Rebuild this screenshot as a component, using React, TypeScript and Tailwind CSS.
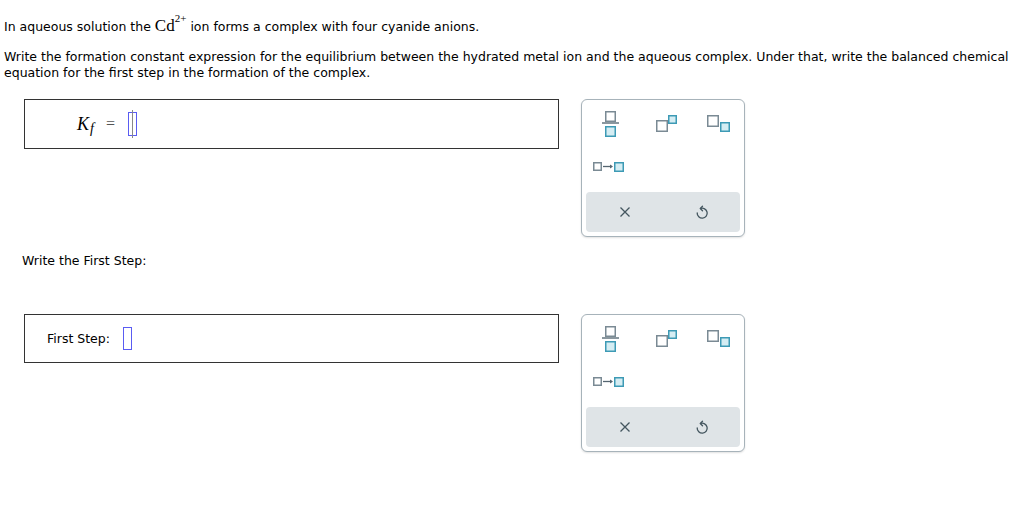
import { ReactNode } from 'react';

function Sq({ x, y, s, fill }: { x: number; y: number; s: number; fill?: boolean }) {
  return (
    <rect
      x={x + 0.75}
      y={y + 0.75}
      width={s - 1.5}
      height={s - 1.5}
      fill={fill ? '#d5edf3' : '#fff'}
      stroke={fill ? '#3d9ab5' : '#7a8a94'}
      strokeWidth="1.5"
    />
  );
}

function Tool({ children, w = 40, h = 30 }: { children: ReactNode; w?: number; h?: number }) {
  return (
    <button className="flex items-center justify-center h-[44px]">
      <svg width={w} height={h} viewBox={`0 0 ${w} ${h}`}>
        {children}
      </svg>
    </button>
  );
}

function Palette() {
  return (
    <div className="w-[164px] h-[138px] border border-[#a7b3ba] rounded-[6px] bg-white shadow-[0_1px_2px_rgba(0,0,0,0.12)] flex flex-col">
      <div className="grid grid-cols-3 pt-[1px] px-[1px]">
        <Tool>
          <Sq x={15} y={3} s={11} />
          <rect x={12} y={14} width={17} height={2} fill="#8a979f" />
          <Sq x={15} y={18} s={11} fill />
        </Tool>
        <Tool>
          <Sq x={13} y={12} s={12} />
          <Sq x={25} y={7} s={9} fill />
        </Tool>
        <Tool>
          <Sq x={11} y={7} s={12} />
          <Sq x={24} y={14} s={10} fill />
        </Tool>
        <Tool w={50}>
          <Sq x={8} y={10} s={9} />
          <line x1={18} y1={14.5} x2={27} y2={14.5} stroke="#556570" strokeWidth="1.3" />
          <path d="M25 12.5 L28 14.5 L25 16.5 Z" fill="#556570" />
          <Sq x={29} y={10} s={10} fill />
        </Tool>
      </div>
      <div className="mt-auto mx-[4px] mb-[4px] h-[40px] rounded-[4px] bg-[#dfe4e7] grid grid-cols-2">
        <button className="flex items-center justify-center">
          <svg width="12" height="12" viewBox="0 0 12 12">
            <path d="M1.5 1.5 L10.5 10.5 M10.5 1.5 L1.5 10.5" stroke="#44565f" strokeWidth="1.3" />
          </svg>
        </button>
        <button className="flex items-center justify-center">
          <svg width="14" height="15" viewBox="0 0 14 15" fill="none">
            <path d="M5.5 3.5 A5 5 0 1 1 2.2 8" stroke="#44565f" strokeWidth="1.3" strokeLinecap="round" />
            <path d="M7.5 1.2 L5.3 3.5 L7.5 5.8" stroke="#44565f" strokeWidth="1.3" strokeLinecap="round" strokeLinejoin="round" />
          </svg>
        </button>
      </div>
    </div>
  );
}

function Cursor({ h }: { h: number }) {
  return <span className="inline-block w-[9px] border border-[#5a5cf2]" style={{ height: h }} />;
}

export default function App() {
  return (
    <div className="w-[1024px] h-[518px] bg-white text-black font-['Verdana','DejaVu_Sans',sans-serif] text-[12.5px] leading-[16px]">
      <div className="pl-[4px] pt-[17px]">
        <p>
          In aqueous solution the{' '}
          <span className="font-['Liberation_Serif',serif] text-[17px] leading-none">Cd</span>
          <span className="font-['Liberation_Serif',serif] text-[11px] leading-none relative top-[-9px]">2+</span>{' '}
          ion forms a complex with four cyanide anions.
        </p>
        <p className="mt-[14px] pr-[8px]">
          Write the formation constant expression for the equilibrium between the hydrated metal ion and the aqueous complex. Under
          that, write the balanced chemical equation for the first step in the formation of the complex.
        </p>
      </div>

      <div className="flex items-start gap-[22px] pl-[24px] mt-[18px]">
        <div className="w-[535px] h-[50px] border border-[#333] flex items-center pl-[52px]">
          <span className="font-['Liberation_Serif',serif] italic text-[18px]">K</span>
          <span className="font-['Liberation_Serif',serif] italic text-[14px] relative top-[5px] ml-[1px]">f</span>
          <span className="font-['Liberation_Serif',serif] text-[16px] text-[#555] ml-[12px]">=</span>
          <span className="ml-[13px] relative flex items-center">
            <Cursor h={24} />
            <span className="absolute left-[4px] top-[-2px] w-[1px] h-[28px] bg-[#888]" />
          </span>
        </div>
        <Palette />
      </div>

      <p className="pl-[22px] mt-[16px]">Write the First Step:</p>

      <div className="flex items-start gap-[22px] pl-[24px] mt-[45px]">
        <div className="w-[535px] h-[49px] border border-[#333] flex items-center pl-[22px]">
          <span>First Step:</span>
          <span className="ml-[13px] flex items-center">
            <Cursor h={23} />
          </span>
        </div>
        <Palette />
      </div>
    </div>
  );
}
